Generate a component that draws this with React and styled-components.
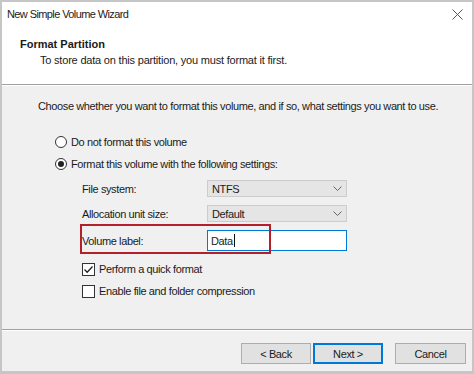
import React from 'react'
import styled, {createGlobalStyle, css} from 'styled-components'

const GlobalStyle = createGlobalStyle`
  html, body {
    margin: 0;
    padding: 0;
    background: #ffffff;
  }
  * {
    box-sizing: border-box;
  }
`

const Window = styled.div`
  width: 474px;
  height: 374px;
  display: flex;
  flex-direction: column;
  border: 2px solid #c6c6c6;
  border-bottom-width: 3px;
  background: #f0f0f0;
  font-family: "Liberation Sans", Arial, sans-serif;
  font-size: 11px;
  letter-spacing: -0.38px;
  color: #1b1b1b;
`

const TitleBar = styled.div`
  height: 24px;
  flex: none;
  display: flex;
  align-items: center;
  justify-content: space-between;
  padding: 0 9px 0 5px;
  background: #ffffff;
  font-size: 11px;
  letter-spacing: -0.6px;
  color: #222;
`

const CloseIcon = () => (
  <svg width="11" height="11" viewBox="0 0 11 11">
    <path d="M0.5 0.5 L10.5 10.5 M10.5 0.5 L0.5 10.5" stroke="#555" strokeWidth="1" fill="none" />
  </svg>
)

const Header = styled.div`
  flex: none;
  background: #ffffff;
  padding: 10px 0 16px 18px;
  border-bottom: 1px solid #a0a0a0;
`

const Heading = styled.div`
  font-weight: bold;
  line-height: 16px;
  letter-spacing: 0;
`

const Subtitle = styled.div`
  line-height: 16px;
  padding-left: 20px;
  letter-spacing: -0.2px;
`

const Body = styled.div`
  flex: 1;
  display: flex;
  flex-direction: column;
  padding: 12px 0 0 36px;
  border-top: 1px solid #ffffff;
  border-bottom: 1px solid #a0a0a0;
`

const Intro = styled.div`
  line-height: 16px;
  margin-bottom: 20px;
`

const OptionRow = styled.label`
  display: flex;
  align-items: center;
  gap: 4px;
  height: 16px;
  margin-left: ${p => p.indent || 0}px;
  margin-bottom: ${p => p.gap || 0}px;
`

const RadioMark = styled.span`
  width: 12px;
  height: 12px;
  border-radius: 50%;
  border: 1px solid #333;
  background: #fff;
  display: flex;
  align-items: center;
  justify-content: center;
  &::after {
    content: "";
    width: 6px;
    height: 6px;
    border-radius: 50%;
    background: ${p => (p.checked ? '#222' : 'transparent')};
  }
`

const CheckMark = styled.span`
  width: 13px;
  height: 13px;
  border: 1px solid #333;
  background: #fff;
  display: flex;
  align-items: center;
  justify-content: center;
`

const Form = styled.div`
  display: grid;
  grid-template-columns: 125px 140px;
  row-gap: 8px;
  margin-left: 44px;
  margin-bottom: 10px;
  align-items: center;
`

const FieldLabel = styled.div`
  line-height: 16px;
`

const fieldBox = css`
  width: 140px;
  display: flex;
  align-items: center;
  padding: 0 4px;
  font-size: 11px;
`

const Select = styled.div`
  ${fieldBox};
  height: 17px;
  justify-content: space-between;
  background: #e5e5e5;
  border: 1px solid #cccccc;
`

const TextBox = styled.div`
  ${fieldBox};
  height: 21px;
  background: #fff;
  border: 1px solid #0078d7;
  padding-left: 3px;
`

const Caret = styled.span`
  width: 1px;
  height: 13px;
  background: #111;
  margin-left: 1px;
`

const LabelCell = styled.div`
  position: relative;
  line-height: 16px;
`

const Highlight = styled.div`
  position: absolute;
  left: -2px;
  top: -9px;
  width: 191px;
  height: 30px;
  border: 2px solid #b3202c;
  pointer-events: none;
`

const Footer = styled.div`
  flex: none;
  height: 41px;
  display: flex;
  justify-content: flex-end;
  align-items: flex-start;
  padding: 12px 6px 0 0;
  border-top: 1px solid #ffffff;
`

const Button = styled.div`
  width: ${p => p.w || 70}px;
  height: 21px;
  margin-left: ${p => p.gap || 0}px;
  display: flex;
  align-items: center;
  justify-content: center;
  background: #e1e1e1;
  border: 1px solid #adadad;
  ${p => p.primary && css`
    border: 2px solid #0078d7;
  `}
`

const Chevron = () => (
  <svg width="9" height="6" viewBox="0 0 9 6">
    <path d="M0.5 0.5 L4.5 4.5 L8.5 0.5" stroke="#666" strokeWidth="1" fill="none" />
  </svg>
)

const Check = () => (
  <svg width="11" height="11" viewBox="0 0 11 11">
    <path d="M1.5 5.5 L4.2 8.2 L9.5 2.5" stroke="#222" strokeWidth="1.3" fill="none" />
  </svg>
)

const App = () => (
  <>
    <GlobalStyle />
    <Window>
      <TitleBar>
        <span>New Simple Volume Wizard</span>
        <CloseIcon />
      </TitleBar>
      <Header>
        <Heading>Format Partition</Heading>
        <Subtitle>To store data on this partition, you must format it first.</Subtitle>
      </Header>
      <Body>
        <Intro>Choose whether you want to format this volume, and if so, what settings you want to use.</Intro>
        <OptionRow indent={17} gap={6}>
          <RadioMark />
          Do not format this volume
        </OptionRow>
        <OptionRow indent={17} gap={8}>
          <RadioMark checked />
          Format this volume with the following settings:
        </OptionRow>
        <Form>
          <FieldLabel>File system:</FieldLabel>
          <Select>NTFS<Chevron /></Select>
          <FieldLabel>Allocation unit size:</FieldLabel>
          <Select>Default<Chevron /></Select>
          <LabelCell>
            Volume label:
            <Highlight />
          </LabelCell>
          <TextBox>Data<Caret /></TextBox>
        </Form>
        <OptionRow indent={44} gap={6}>
          <CheckMark><Check /></CheckMark>
          Perform a quick format
        </OptionRow>
        <OptionRow indent={44}>
          <CheckMark />
          Enable file and folder compression
        </OptionRow>
      </Body>
      <Footer>
        <Button>&lt; Back</Button>
        <Button primary gap={2}>Next &gt;</Button>
        <Button gap={12} w={71}>Cancel</Button>
      </Footer>
    </Window>
  </>
)

export default App
